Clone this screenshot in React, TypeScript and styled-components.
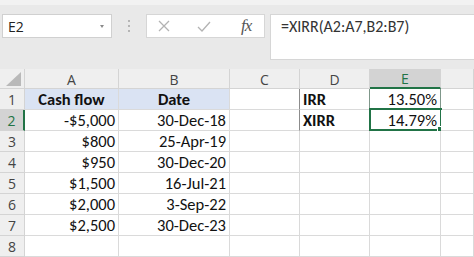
import React from 'react'
import styled, { createGlobalStyle } from 'styled-components'

const GlobalStyle = createGlobalStyle`
  html, body {
    margin: 0;
    padding: 0;
    background: #e9e9e9;
  }
`

const green = '#217346'
const cellFont = `Carlito, Calibri, Lato, 'Open Sans', sans-serif`
const uiFont = `'Open Sans', 'Noto Sans', sans-serif`

const Window = styled.div`
  width: 474px;
  height: 257px;
  overflow: hidden;
  background: #e9e9e9;
  display: flex;
  flex-direction: column;
`

const FormulaBar = styled.div`
  height: 72px;
  box-sizing: border-box;
  padding: 14px 0 0 2px;
  display: flex;
  align-items: flex-start;
  background: linear-gradient(#f2f2f2 0 5px, #e9e9e9 5px);
`

const NameBox = styled.div`
  width: 110px;
  height: 24px;
  box-sizing: border-box;
  background: #fff;
  border: 1px solid #d0d0d0;
  display: flex;
  align-items: center;
  justify-content: space-between;
  padding: 0 7px 0 5px;
  font-family: ${uiFont};
  font-size: 14px;
  color: #222;
`

const Caret = styled.span`
  width: 0;
  height: 0;
  border-left: 2.5px solid transparent;
  border-right: 2.5px solid transparent;
  border-top: 3px solid #8a8a8a;
`

const Grip = styled.div`
  width: 34px;
  height: 24px;
  display: flex;
  flex-direction: column;
  align-items: center;
  justify-content: center;
  gap: 3px;

  span {
    width: 2px;
    height: 2px;
    background: #b5b5b5;
  }
`

const ButtonBox = styled.div`
  width: 119px;
  height: 24px;
  box-sizing: border-box;
  background: #fff;
  border: 1px solid #d6d6d6;
  display: flex;
  align-items: center;
  padding-left: 11px;
  gap: 27px;
`

const Fx = styled.span`
  font-family: 'Liberation Serif', serif;
  font-style: italic;
  font-size: 17px;
  color: #555;
  margin-left: 3px;
  letter-spacing: -1px;
`

const FormulaInput = styled.div`
  flex: 1;
  height: 46px;
  margin-left: 5px;
  box-sizing: border-box;
  background: #fff;
  border: 1px solid #d6d6d6;
  border-right: none;
  padding: 2px 0 0 10px;
  font-family: ${cellFont};
  font-size: 16px;
  color: #333;
`

const Sheet = styled.div`
  display: grid;
  grid-template-columns: 25px 94px 111px 70px 70px 71px 1fr;
  grid-template-rows: 20px;
  grid-auto-rows: 21px;
  background: #fff;
`

const Header = styled.div<{ $active?: boolean; $row?: boolean }>`
  box-sizing: border-box;
  background: ${p => (p.$active ? '#d3d3d3' : '#efefef')};
  border-right: ${p =>
    p.$row && p.$active ? `2px solid ${green}` : '1px solid #d4d4d4'};
  border-bottom: ${p =>
    !p.$row && p.$active ? `2px solid ${green}` : '1px solid #d4d4d4'};
  display: flex;
  align-items: center;
  justify-content: center;
  font-family: ${uiFont};
  font-size: 14px;
  color: ${p => (p.$active ? green : '#444')};
  padding-top: 1px;
`

const Corner = styled(Header)`
  position: relative;

  svg {
    position: absolute;
    right: 3px;
    bottom: 2px;
  }
`

const Cell = styled.div<{
  $align?: 'left' | 'right' | 'center'
  $bold?: boolean
  $fill?: string
  $edge?: string
  $sideEdges?: string
}>`
  position: relative;
  box-sizing: border-box;
  background: ${p => p.$fill || '#fff'};
  border-right: 1px solid ${p => p.$sideEdges || '#dadada'};
  border-bottom: 1px solid #dadada;
  border-left: ${p =>
    p.$edge ? `1px solid ${p.$edge}` : p.$sideEdges ? `1px solid ${p.$sideEdges}` : 'none'};
  margin-left: ${p => (p.$edge || p.$sideEdges ? '-1px' : '0')};
  display: flex;
  align-items: flex-end;
  justify-content: ${p =>
    p.$align === 'right' ? 'flex-end' : p.$align === 'center' ? 'center' : 'flex-start'};
  padding: 0 3px 0 3px;
  font-family: ${cellFont};
  font-size: 16.5px;
  line-height: 20px;
  font-weight: ${p => (p.$bold ? 700 : 400)};
  color: #111;
  white-space: nowrap;
`

const Selection = styled.div`
  position: absolute;
  left: -1px;
  top: -2px;
  right: -2px;
  bottom: -1px;
  border: 2px solid ${green};
`

const Handle = styled.div`
  position: absolute;
  right: -4px;
  bottom: -4px;
  width: 5px;
  height: 5px;
  background: ${green};
  border: 1px solid #fff;
`

const columns = ['A', 'B', 'C', 'D', 'E']

type Row = {
  a?: string
  b?: string
  d?: string
  e?: string
}

const rows: Row[] = [
  { a: 'Cash flow', b: 'Date', d: 'IRR', e: '13.50%' },
  { a: '-$5,000', b: '30-Dec-18', d: 'XIRR', e: '14.79%' },
  { a: '$800', b: '25-Apr-19' },
  { a: '$950', b: '30-Dec-20' },
  { a: '$1,500', b: '16-Jul-21' },
  { a: '$2,000', b: '3-Sep-22' },
  { a: '$2,500', b: '30-Dec-23' },
  {},
]

const headerFill = '#dae3f3'

const App = () => (
  <Window>
    <GlobalStyle />
    <FormulaBar>
      <NameBox>
        E2
        <Caret />
      </NameBox>
      <Grip>
        <span />
        <span />
        <span />
      </Grip>
      <ButtonBox>
        <svg width="12" height="12" viewBox="0 0 12 12">
          <path d="M1 1L11 11M11 1L1 11" stroke="#b3b3b3" strokeWidth="1.3" fill="none" />
        </svg>
        <svg width="14" height="11" viewBox="0 0 14 11">
          <path d="M1 6L5 10L13 1" stroke="#b3b3b3" strokeWidth="1.3" fill="none" />
        </svg>
        <Fx>fx</Fx>
      </ButtonBox>
      <FormulaInput>=XIRR(A2:A7,B2:B7)</FormulaInput>
    </FormulaBar>
    <Sheet>
      <Corner>
        <svg width="15" height="14" viewBox="0 0 15 14">
          <path d="M15 0V14H0Z" fill="#b9b9b9" />
        </svg>
      </Corner>
      {columns.map(c => (
        <Header key={c} $active={c === 'E'}>
          {c}
        </Header>
      ))}
      <Header />
      {rows.map((r, i) => {
        const first = i === 0
        const second = i === 1
        return (
          <React.Fragment key={i}>
            <Header $row $active={second}>
              {i + 1}
            </Header>
            <Cell
              $align={first ? 'center' : 'right'}
              $bold={first}
              $fill={first ? headerFill : undefined}
            >
              {r.a}
            </Cell>
            <Cell
              $align={first ? 'center' : 'right'}
              $bold={first}
              $fill={first ? headerFill : undefined}
            >
              {r.b}
            </Cell>
            <Cell />
            <Cell $bold $edge={first || second ? '#8c8c8c' : undefined}>
              {r.d}
            </Cell>
            <Cell $align="right" $sideEdges={first ? '#7f978a' : undefined}>
              {r.e}
              {second && (
                <Selection>
                  <Handle />
                </Selection>
              )}
            </Cell>
            <Cell />
          </React.Fragment>
        )
      })}
    </Sheet>
  </Window>
)

export default App
